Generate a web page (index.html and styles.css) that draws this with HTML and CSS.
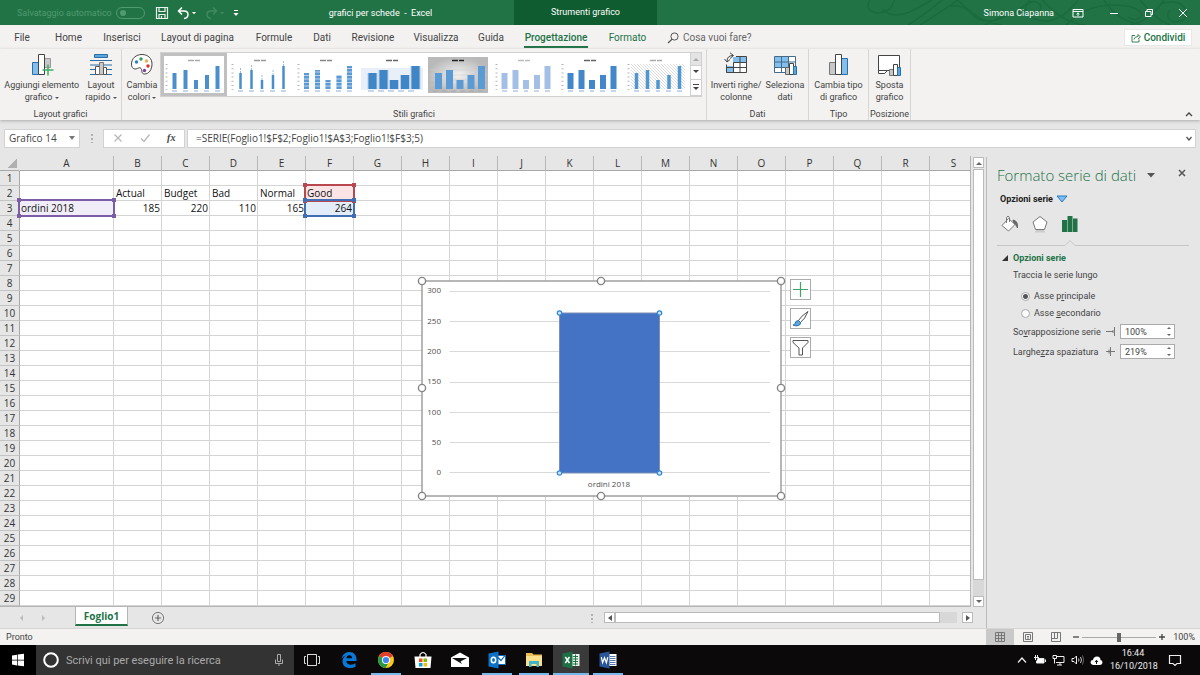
FILE: index.html
```html
<!DOCTYPE html>
<html lang="it">
<head>
<meta charset="utf-8">
<title>grafici per schede - Excel</title>
<link rel="stylesheet" href="styles.css">
</head>
<body>
<svg class="defs" aria-hidden="true">
  <defs>
    <radialGradient id="grayGlow"><stop offset="0" stop-color="#f2f2f2"/><stop offset="1" stop-color="#b9b9b9"/></radialGradient>
    <pattern id="hatch" width="3" height="3" patternUnits="userSpaceOnUse"><path d="M0 0L3 3" stroke="#cfcfcf" stroke-width=".7"/></pattern>
    <symbol id="bars" viewBox="0 0 66 43" overflow="visible"><path d="M13.500 36V20M24.500 36V17M35 36V27M46 36V22M56.500 36V13"/></symbol>
    <symbol id="axis" viewBox="0 0 66 43"><path d="M5.500 11v26" stroke="#b5b5b5" stroke-width="2" stroke-dasharray="1 3.200"/><path d="M11 38h5M22 38h5M33 38h4M43 38h5M54 38h5" stroke="#8fb0d3" stroke-width="1.200"/></symbol>
    <symbol id="heading" viewBox="0 0 66 43"><path d="M27 7.500h12" stroke-width="1.500" stroke-dasharray="6 1 5"/></symbol>
  </defs>
</svg>

<header class="titlebar">
  <div class="quick">
    <span class="autosave">Salvataggio automatico</span>
    <button class="toggle" aria-label="Salvataggio automatico"></button>
    <button class="qa" aria-label="Salva"><svg width="14" height="14" viewBox="0 0 14 14"><path d="M1.500 1.500h11v11h-11zM4 1.500v4h6v-4M4 12.500v-4h6v4M6.500 12V10" fill="none" stroke="#e6f2ea" stroke-width="1.200"/></svg></button>
    <button class="qa" aria-label="Annulla"><svg width="20" height="14" viewBox="0 0 20 14"><path d="M5 1.500L1.500 5L5 8.500M1.500 5H7q4 0 4 3.500T7 12.500" fill="none" stroke="#fff" stroke-width="1.500"/><path d="M15 6h4l-2 2.200z" fill="#fff"/></svg></button>
    <button class="qa" aria-label="Ripeti"><svg width="20" height="14" viewBox="0 0 20 14"><path d="M8 1.500L11.500 5L8 8.500M11.500 5H6q-4 0-4 3.500T6 12.500" fill="none" stroke="#3f8a5f" stroke-width="1.500"/><path d="M15 6h4l-2 2.200z" fill="#3f8a5f"/></svg></button>
    <button class="qa" aria-label="Personalizza"><svg width="6" height="8" viewBox="0 0 6 8"><path d="M1 1.500h4" stroke="#fff"/><path d="M.5 4h5L3 7z" fill="#fff"/></svg></button>
    <span class="doc">grafici per schede &nbsp;-&nbsp; Excel</span>
  </div>
  <div class="context">Strumenti grafico</div>
  <div class="account">
    <svg class="swirls" viewBox="0 0 340 25" preserveAspectRatio="xMaxYMid slice" fill="none" stroke="#1b6a3f" stroke-width="1.500" aria-hidden="true"><path d="M10 0q-6 10 6 13q16 0 18-13M22 9q10 10 28 3L72 0M48 25Q66 14 82 0M60 25Q84 10 98 0M90 6q14-2 22 8q10 12 30 4T170 0M98 0q20 22 44 25M125 25Q150 10 166 12q18 4 14-8q-8-6-14 2q-4 12 18 15q20 0 36-24M182 0q22 24 44 25M206 25q20-20 46-20t30 10q-6 8-14 2M244 0q12 20 38 25M280 0q16 20 30 25M270 25q20-4 34-25M300 4q20-6 26 6q2 12-12 12q-10-4-4-12"/></svg>
    <span class="user">Simona Ciapanna</span>
    <button class="win" aria-label="Opzioni barra multifunzione"><svg width="12" height="10" viewBox="0 0 12 10"><path d="M1 1.500h10v7.500H1zM1 3.500h10M6 8V5M4.500 6.200L6 4.800l1.500 1.400" fill="none" stroke="#fff"/></svg></button>
    <button class="win" aria-label="Riduci a icona"><svg width="10" height="10" viewBox="0 0 10 10"><path d="M1 5.500h8" stroke="#fff"/></svg></button>
    <button class="win" aria-label="Ripristina"><svg width="10" height="10" viewBox="0 0 10 10"><path d="M1.500 3.500h5.500v5h-5.500zM3 3.500v-2h5.500v5H7" fill="none" stroke="#fff"/></svg></button>
    <button class="win" aria-label="Chiudi"><svg width="10" height="10" viewBox="0 0 10 10"><path d="M1 1l8 8M9 1L1 9" stroke="#fff"/></svg></button>
  </div>
</header>

<nav class="tabs">
  <button>File</button><button>Home</button><button>Inserisci</button><button>Layout di pagina</button><button>Formule</button><button>Dati</button><button>Revisione</button><button>Visualizza</button><button>Guida</button><button class="tab-green tab-on"><span>Progettazione</span></button><button class="tab-green">Formato</button>
  <button class="tell"><svg width="12" height="12" viewBox="0 0 12 12"><circle cx="7.500" cy="4.500" r="3.600" fill="none" stroke="#555"/><path d="M5 7.200L1 11" stroke="#555" stroke-width="1.200"/></svg>Cosa vuoi fare?</button>
  <button class="share"><svg width="10" height="10" viewBox="0 0 10 10"><path d="M4 2.500H1v6.500h7V6.500M3 6.500q.5-3 4-3V1.500l2.500 2.500L7 6" fill="none" stroke="#217346" stroke-width=".9"/></svg>Condividi</button>
</nav>

<section class="ribbon">
  <div class="group g-layout">
    <div class="tools">
      <button class="tool"><svg width="24" height="24" viewBox="0 0 24 24"><path d="M2.500 10.500h6v12h-6z" fill="#83beec" stroke="#2b6fa8"/><path d="M14.500 6.500h6v9h-6z" fill="#c8c8c8" stroke="#999"/><path d="M8.500 2.500h6v20h-6z" fill="#fff" stroke="#444"/><path d="M18 12.500v11M12.500 18h11" stroke="#3fae68" stroke-width="1.500"/></svg><span>Aggiungi elemento<br>grafico <i></i></span></button>
      <button class="tool"><svg width="24" height="24" viewBox="0 0 24 24"><path d="M5.500 2.500h13v3h-13z" fill="#5ca6dd" stroke="#2b6fa8"/><path d="M1 8.500h22M1 13h22M1 17.500h22M1 22.500h22" stroke="#2b6fa8"/><path d="M6.500 14.500h4v8h-4z" fill="#fff" stroke="#555"/><path d="M10.500 10.500h4v12h-4z" fill="#c8c8c8" stroke="#777"/><path d="M14.500 15.500h3v7h-3z" fill="#fff" stroke="#555"/></svg><span>Layout<br>rapido <i></i></span></button>
    </div>
    <div class="caption">Layout grafici</div>
  </div>
  <div class="group g-styles">
    <div class="tools">
      <button class="tool"><svg width="24" height="24" viewBox="0 0 24 24"><path d="M12 2.500c6 0 10 4 10 9.500s-3 10-7.500 10c-3.500 0-2-3.500-3.500-5.500s-3.500.5-6 .5-3.500-2.500-3.500-5C1.500 6.500 6 2.500 12 2.500z" fill="#fff" stroke="#444"/><circle cx="6.500" cy="10" r="1.700" fill="#2b7cd3"/><circle cx="11" cy="7" r="1.700" fill="#2e9c5a"/><circle cx="16.500" cy="9" r="1.700" fill="#e8b04a"/><circle cx="18" cy="14" r="1.700" fill="#d9302c"/><circle cx="14.500" cy="18.500" r="1.700" fill="#7b3f9e"/></svg><span>Cambia<br>colori <i></i></span></button>
      <div class="gallery">
        <button class="thumb thumb-on" aria-label="Stile 1"><svg viewBox="0 0 66 43"><use href="#heading" stroke="#aaa"/><use href="#axis"/><use href="#bars" stroke="#4a8fcb" stroke-width="4"/></svg></button>
        <button class="thumb" aria-label="Stile 2"><svg viewBox="0 0 66 43"><use href="#heading" stroke="#999"/><use href="#axis"/><path d="M13.500 20v-5M24.500 17v-5M35 27v-5M46 22v-5M56.500 13v-5" stroke="#9bbfe0" stroke-dasharray="2 1"/><use href="#bars" stroke="#4a8fcb" stroke-width="2.500"/></svg></button>
        <button class="thumb" aria-label="Stile 3"><svg viewBox="0 0 66 43"><use href="#heading" stroke="#888"/><use href="#axis"/><use href="#bars" stroke="#b9d5ee" stroke-width="5"/><use href="#bars" stroke="#5b9bd5" stroke-width="5" stroke-dasharray="2.500 1"/></svg></button>
        <button class="thumb" aria-label="Stile 4"><svg viewBox="0 0 66 43"><path d="M2 15h62v22H2z" fill="#e8eff8"/><use href="#heading" stroke="#666"/><path d="M9 38h50" stroke="#8fb0d3" stroke-dasharray="6 4"/><use href="#bars" stroke="#b8cde6" stroke-width="10"/><use href="#bars" stroke="#3f86c6" stroke-width="8"/></svg></button>
        <button class="thumb" aria-label="Stile 5"><svg viewBox="0 0 66 43"><path d="M3 4h60v36H3z" fill="url(#grayGlow)"/><path d="M5 17h56M5 22h56M5 27h56M5 32h56" stroke="#ccc" stroke-width=".6"/><use href="#heading" stroke="#222"/><path d="M8 38h51" stroke="#aaa" stroke-dasharray="5 4"/><use href="#bars" stroke="#5b9bd5" stroke-width="7"/></svg></button>
        <button class="thumb" aria-label="Stile 6"><svg viewBox="0 0 66 43"><use href="#heading" stroke="#bbb"/><use href="#axis"/><use href="#bars" stroke="#a3bfe5" stroke-width="6"/></svg></button>
        <button class="thumb" aria-label="Stile 7"><svg viewBox="0 0 66 43"><use href="#heading" stroke="#666"/><use href="#axis"/><use href="#bars" stroke="#4187c9" stroke-width="6"/></svg></button>
        <button class="thumb" aria-label="Stile 8"><svg viewBox="0 0 66 43"><path d="M8 11h54v25H8z" fill="url(#hatch)"/><use href="#heading" stroke="#aaa"/><use href="#axis"/><use href="#bars" stroke="#4f97d3" stroke-width="3.500"/></svg></button>
        <div class="gallery-nav">
          <button class="off" aria-label="Su"><svg width="6" height="4"><path d="M0 4h6L3 1z" fill="#aaa"/></svg></button>
          <button aria-label="Giù"><svg width="6" height="4"><path d="M0 0h6L3 3z" fill="#444"/></svg></button>
          <button aria-label="Altro"><svg width="6" height="7"><path d="M0 .5h6" stroke="#444"/><path d="M0 3h6L3 6z" fill="#444"/></svg></button>
        </div>
      </div>
    </div>
    <div class="caption">Stili grafici</div>
  </div>
  <div class="group g-data">
    <div class="tools">
      <button class="tool"><svg width="24" height="24" viewBox="0 0 24 24"><path d="M2 14h7v7H2zM9 5h14v6H9z" fill="#83beec"/><path d="M9 11h14v10H9z" fill="#fff"/><path d="M12 4.500h10.500v16h-20v-8M2.500 15.500h20M9.500 10.500h13M9.500 10.500v10M16 4.500v16" fill="none" stroke="#444"/><path d="M3 9.500Q3 3.500 9 3.500M6 .8l3.500 2.700L6 6.500M.5 7L3 10L6 7.500" fill="none" stroke="#444"/></svg><span>Inverti righe/<br>colonne</span></button>
      <button class="tool"><svg width="24" height="24" viewBox="0 0 24 24"><path d="M1.500 4.500h21v16h-21z" fill="#fff"/><path d="M1.500 4.500h14v11h-14z" fill="#83beec"/><path d="M1.500 4.500h21v16h-21zM8.500 4.500v16M15.500 4.500v16M1.500 10h21M1.500 15.500h21" fill="none" stroke="#446b8a"/><path d="M12.500 15.500h4v7h-4z" fill="#c8c8c8" stroke="#666"/><path d="M16.500 11.500h4v11h-4z" fill="#fff" stroke="#444"/><path d="M20.500 14.500h3v8h-3z" fill="#5ca6dd" stroke="#2b6fa8"/></svg><span>Seleziona<br>dati</span></button>
    </div>
    <div class="caption">Dati</div>
  </div>
  <div class="group g-type">
    <div class="tools"><button class="tool"><svg width="24" height="24" viewBox="0 0 24 24"><path d="M2.500 10.500h6v12h-6z" fill="#c8c8c8" stroke="#777"/><path d="M14.500 6.500h6v16h-6z" fill="#83beec" stroke="#2b6fa8"/><path d="M8.500 2.500h6v20h-6z" fill="#fff" stroke="#444"/></svg><span>Cambia tipo<br>di grafico</span></button></div>
    <div class="caption">Tipo</div>
  </div>
  <div class="group g-place">
    <div class="tools"><button class="tool"><svg width="24" height="24" viewBox="0 0 24 24"><path d="M1.500 3.500h21v15h-12l-3 3h-6z" fill="#fff" stroke="#444"/><path d="M1.500 18.500h9l-3 3" fill="none" stroke="#444"/><path d="M12.500 17.500h4v6h-4z" fill="#c8c8c8" stroke="#777"/><path d="M16.500 12.500h4v11h-4z" fill="#fff" stroke="#444"/><path d="M20.500 15.500h3v8h-3z" fill="#5ca6dd" stroke="#2b6fa8"/></svg><span>Sposta<br>grafico</span></button></div>
    <div class="caption">Posizione</div>
  </div>
  <button class="collapse" aria-label="Comprimi"><svg width="8" height="5"><path d="M1 4l3-3l3 3" fill="none" stroke="#444" stroke-width="1.300"/></svg></button>
</section>

<section class="formula-bar">
  <button class="namebox">Grafico 14<svg width="6" height="4"><path d="M0 0h6L3 4z" fill="#777"/></svg></button>
  <span class="grip"></span>
  <div class="fx">
    <button aria-label="Annulla"><svg width="10" height="10" viewBox="0 0 10 10"><path d="M1.500 1.500l7 7M8.500 1.500l-7 7" stroke="#b8b8b8" stroke-width="1.300"/></svg></button>
    <button aria-label="Invio"><svg width="10" height="10" viewBox="0 0 10 10"><path d="M1 5.500l3 3l5.500-7" fill="none" stroke="#b8b8b8" stroke-width="1.300"/></svg></button>
    <button class="fx-sign" aria-label="Inserisci funzione"><i>f</i>x</button>
  </div>
  <div class="formula"><input aria-label="Formula" value="=SERIE(Foglio1!$F$2;Foglio1!$A$3;Foglio1!$F$3;5)"><svg width="6" height="5"><path d="M.5 1L3 4L5.500 1" fill="none" stroke="#555" stroke-width="1.300"/></svg></div>
</section>

<main class="workspace">
  <section class="book">
    <div class="upper">
      <div class="sheet">
        <table class="grid" id="grid"></table>
        <div class="chart">
          <svg width="372" height="228" viewBox="416 275 372 228">
            <path d="M422 281h359v215H422z" fill="#fff" stroke="#a0a0a0" stroke-width="1.500"/>
            <path d="M449.500 291.500H770M449.500 321.500H770M449.500 351.500H770M449.500 382.500H770M449.500 412.500H770M449.500 442.500H770M449.500 472.500H770" stroke="#d9d9d9"/>
            <g class="axis-text" text-anchor="end"><text x="441" y="293">300</text><text x="441" y="324">250</text><text x="441" y="354">200</text><text x="441" y="384">150</text><text x="441" y="415">100</text><text x="441" y="445">50</text><text x="441" y="475">0</text></g>
            <text class="axis-text" x="609" y="487" text-anchor="middle">ordini 2018</text>
            <path d="M559.500 313h100v160h-100z" fill="#4472c4" stroke="#7d8fb3"/>
            <g fill="#cfe6fa" stroke="#2f86d6" stroke-width="1.200"><circle cx="559.500" cy="313" r="2.200"/><circle cx="659.500" cy="313" r="2.200"/><circle cx="559.500" cy="473" r="2.200"/><circle cx="659.500" cy="473" r="2.200"/></g>
            <g fill="#fff" stroke="#858585" stroke-width="1.400"><circle cx="422" cy="281" r="3.600"/><circle cx="601" cy="281" r="3.600"/><circle cx="781" cy="281" r="3.600"/><circle cx="422" cy="388" r="3.600"/><circle cx="781" cy="388" r="3.600"/><circle cx="422" cy="496" r="3.600"/><circle cx="601" cy="496" r="3.600"/><circle cx="781" cy="496" r="3.600"/></g>
          </svg>
          <div class="chart-side">
            <button aria-label="Elementi grafico"><svg width="19" height="19" viewBox="0 0 19 19"><path d="M9.500 2v15M2 9.500h15" stroke="#3fa66b" stroke-width="1.200"/></svg></button>
            <button aria-label="Stili grafico"><svg width="19" height="19" viewBox="0 0 19 19"><path d="M17 2.500Q10 7 7.500 11.500l2 2Q14 10 17 2.500z" fill="#fff" stroke="#555"/><path d="M7.500 11.500q-3 0-3.500 3-.5 1.500-2 1.500 3 1.500 5.500.5t2-3z" fill="#5ca6dd" stroke="#2b6fa8"/></svg></button>
            <button aria-label="Filtri grafico"><svg width="19" height="19" viewBox="0 0 19 19"><path d="M2 2.500h15v2L11.500 10v7h-3.500v-7L2 4.500z" fill="#fff" stroke="#555"/></svg></button>
          </div>
        </div>
      </div>
      <div class="vscroll"><button aria-label="Su"><svg width="6" height="4"><path d="M0 4h6L3 1z" fill="#666"/></svg></button><span class="vthumb"></span><span class="vtrack"></span><button aria-label="Giù"><svg width="6" height="4"><path d="M0 0h6L3 3z" fill="#666"/></svg></button></div>
    </div>
    <div class="sheet-tabs">
      <span class="sheet-nav"><svg width="28" height="6"><path d="M4 0v6L1 3zM23 0v6l3-3z" fill="#bbb"/></svg></span>
      <button class="sheet-tab">Foglio1</button>
      <button class="add" aria-label="Nuovo foglio"><svg width="14" height="14" viewBox="0 0 14 14"><circle cx="7" cy="7" r="5.600" fill="none" stroke="#777"/><path d="M7 4v6M4 7h6" stroke="#666" stroke-width="1.200"/></svg></button>
      <span class="grip grip-tabs"></span>
      <div class="hscroll"><button aria-label="Sinistra"><svg width="4" height="6"><path d="M4 0v6L0 3z" fill="#555"/></svg></button><span class="hthumb"></span><span class="htrack"></span><button aria-label="Destra"><svg width="4" height="6"><path d="M0 0v6l4-3z" fill="#555"/></svg></button></div>
    </div>
  </section>

  <aside class="pane">
    <header class="pane-head"><h2>Formato serie di dati</h2><button aria-label="Opzioni riquadro"><svg width="8" height="5"><path d="M0 0h8L4 4.500z" fill="#555"/></svg></button><button class="pane-close" aria-label="Chiudi"><svg width="8" height="8"><path d="M1 1l6 6M7 1L1 7" stroke="#555" stroke-width="1.500"/></svg></button></header>
    <button class="pane-drop">Opzioni serie<svg width="12" height="8"><path d="M1 1h10L6 7z" fill="#7cc0f5" stroke="#2878b8"/></svg></button>
    <div class="pane-icons">
      <button aria-label="Riempimento"><svg width="20" height="20" viewBox="0 0 20 20"><path d="M13 6q5 .5 4.500 8-1-4-3.500-4z" fill="#666" stroke="#666"/><path d="M2 11.500L8.500 4.500L15 10.500L8.500 17z" fill="#fff" stroke="#777"/><path d="M6.500 9V3.500q1.500-3 3 0V8" fill="none" stroke="#777"/></svg></button>
      <button aria-label="Effetti"><svg width="20" height="20" viewBox="0 0 20 20"><path d="M5 18.500l1-3h8l1 3z" fill="#ccc"/><path d="M10 2.500l7 5.500l-2.500 7.500h-9L3 8z" fill="#fff" stroke="#777"/></svg></button>
      <button aria-label="Opzioni serie"><svg width="20" height="20" viewBox="0 0 20 20"><path d="M2 6h5v12H2zM7.500 2h5v16h-5zM13 4.500h4.500V18H13z" fill="#217346"/></svg></button>
    </div>
    <svg class="pane-rule" width="192" height="8"><path d="M0 6.500h68l5-5l5 5h114" fill="none" stroke="#c6c6c6"/></svg>
    <h3><svg width="6" height="6"><path d="M6 0v6H0z" fill="#333"/></svg>Opzioni serie</h3>
    <p>Traccia le serie lungo</p>
    <label class="radio"><input type="radio" name="asse" checked><span>Asse p<u>r</u>incipale</span></label>
    <label class="radio"><input type="radio" name="asse"><span>Asse <u>s</u>econdario</span></label>
    <div class="spin-row"><label for="ov">So<u>v</u>rapposizione serie</label><svg width="10" height="9"><path d="M0 4.500h7M8.500 0v9M7 3v3" stroke="#777"/></svg><span class="spin"><input id="ov" value="100%"><span><button aria-label="Aumenta"></button><button class="down" aria-label="Riduci"></button></span></span></div>
    <div class="spin-row"><label for="gap">Larghe<u>z</u>za spaziatura</label><svg width="10" height="9"><path d="M0 4.500h9M4.500 0v9M3 2.500v4" stroke="#777"/></svg><span class="spin"><input id="gap" value="219%"><span><button aria-label="Aumenta"></button><button class="down" aria-label="Riduci"></button></span></span></div>
  </aside>
</main>

<footer class="status">
  <span>Pronto</span>
  <div class="views">
    <button class="view-on" aria-label="Normale"><svg width="12" height="12"><path d="M1.500 1.500h9v9h-9zM4.500 1.500v9M7.500 1.500v9M1.500 4.500h9M1.500 7.500h9" fill="none" stroke="#777"/></svg></button>
    <button aria-label="Layout di pagina"><svg width="12" height="12"><path d="M1.500 1.500h9v9h-9zM3.500 3.500h5v5h-5zM5 5.500h2M5 7h2" fill="none" stroke="#777"/></svg></button>
    <button aria-label="Anteprima interruzioni"><svg width="12" height="12"><path d="M1.500 1.500h9v9h-9zM1.500 7.500h6v-6M4.500 1.500v6" fill="none" stroke="#777"/></svg></button>
    <button class="zoom-step" aria-label="Riduci"><svg width="6" height="6"><path d="M0 3h6" stroke="#444" stroke-width="1.300"/></svg></button>
    <input class="zoom" type="range" aria-label="Zoom" value="50">
    <button class="zoom-step" aria-label="Ingrandisci"><svg width="6" height="6"><path d="M0 3h6M3 0v6" stroke="#444" stroke-width="1.300"/></svg></button>
    <span class="zoom-value">100%</span>
  </div>
</footer>

<footer class="taskbar">
  <button class="start" aria-label="Start"><svg width="14" height="14" viewBox="0 0 14 14"><path d="M1 2.500l5-.8v5H1zM6.700 1.600L13 .8v5.900H6.700zM1 7.400h5v5l-5-.8zM6.700 7.400H13v5.900l-6.300-.8z" fill="#fff"/></svg></button>
  <label class="search"><svg width="18" height="18" viewBox="0 0 18 18"><circle cx="9" cy="9" r="6.800" fill="none" stroke="#fff" stroke-width="2"/></svg><input placeholder="Scrivi qui per eseguire la ricerca"><svg width="10" height="14" viewBox="0 0 10 14"><path d="M3.500 1.500h3v7h-3zM1.500 6.500v4h7v-4M5 10.500V13" fill="none" stroke="#aaa"/></svg></label>
  <button class="app" aria-label="Visualizzazione attività"><svg width="18" height="14" viewBox="0 0 18 14"><path d="M4.500 1.500h9v11h-9zM3 3.500H1.500v7H3M15 3.500h1.500v7H15" fill="none" stroke="#ddd"/></svg></button>
  <button class="app" aria-label="Edge"><svg width="18" height="18" viewBox="0 0 18 18"><path d="M1.500 8C2.500 3.500 5.500 1 9.500 1c4.500 0 7 3.500 7 7.300V10H6.300c.2 2.500 2 3.700 4.500 3.700 1.900 0 3.300-.5 4.700-1.400v3.500c-1.500.8-3.300 1.200-5.500 1.200-4.700 0-7.500-2.700-7.500-6.500 0-2.800 1.500-5 4-6.200C4 5 2.500 6.300 1.500 8zM6.400 7.200h5.700c0-1.800-.9-3-2.700-3S6.600 5.400 6.400 7.200z" fill="#0a78d7"/></svg></button>
  <button class="app open" aria-label="Chrome"><svg width="18" height="18" viewBox="0 0 18 18"><circle cx="9" cy="9" r="8" fill="#fbc916"/><path d="M9 9L2.100 5A8 8 0 0 1 16 5z" fill="#e2402f"/><path d="M9 9L2.100 5A8 8 0 0 0 8.500 17L12 11z" fill="#279847"/><circle cx="9" cy="9" r="4" fill="#fff"/><circle cx="9" cy="9" r="3.100" fill="#4384f3"/></svg></button>
  <button class="app" aria-label="Store"><svg width="18" height="18" viewBox="0 0 18 18"><path d="M6 6V3.500q3-4 6 0V6" fill="none" stroke="#fff" stroke-width="1.200"/><path d="M.5 5.500h17L16.500 17h-15z" fill="#fff"/><path d="M5 7.500h3.500V11H5z" fill="#f25022"/><path d="M9.500 7.500H13V11H9.500z" fill="#7fba00"/><path d="M5 12h3.500v3.500H5z" fill="#00a4ef"/><path d="M9.500 12H13v3.500H9.500z" fill="#ffb900"/></svg></button>
  <button class="app" aria-label="Posta"><svg width="20" height="16" viewBox="0 0 20 16"><path d="M1 5.500L10 .5l9 5V15H1z" fill="#fff"/><path d="M2 6h15l-6.500 3.500L12 12z" fill="#111"/></svg></button>
  <button class="app open" aria-label="Outlook"><svg width="18" height="18" viewBox="0 0 18 18"><path d="M9 4.500h8.500v9H9z" fill="#fff" stroke="#0a67b5"/><path d="M10 6.500l3 3l4-5" fill="none" stroke="#0a67b5" stroke-width="1.200"/><path d="M.5 2.500L10.500.5v17l-10-2z" fill="#0d72c6"/><ellipse cx="5.500" cy="9" rx="2.200" ry="2.800" fill="none" stroke="#fff" stroke-width="1.500"/></svg></button>
  <button class="app open" aria-label="Esplora file"><svg width="18" height="16" viewBox="0 0 18 16"><path d="M1 1h6l1.500 1.500H17V14H1z" fill="#e9bf55"/><path d="M1 4h16v10H1z" fill="#fbe08b"/><path d="M4 15V9h10v6h-2.500v-3h-5v3z" fill="#43b4c8"/></svg></button>
  <button class="app open current" aria-label="Excel"><svg width="18" height="18" viewBox="0 0 18 18"><path d="M9 3h8.500v12H9z" fill="#e8f3ec"/><path d="M11 5.500h5M11 8h5M11 10.500h5M11 13h5M13.500 3.500v11" stroke="#217346"/><path d="M.5 2.500L10.500.5v17l-10-2z" fill="#1d7044"/><path d="M3.300 6l4.200 6M7.500 6l-4.200 6" stroke="#fff" stroke-width="1.500"/></svg></button>
  <button class="app open" aria-label="Word"><svg width="18" height="18" viewBox="0 0 18 18"><path d="M9 3h8.500v12H9z" fill="#fff"/><path d="M11 5.500h5.500M11 7.500h5.500M11 9.500h5.500M11 11.500h5.500M11 13.500h5.500" stroke="#2a5699" stroke-width=".8"/><path d="M.5 2.500L10.500.5v17l-10-2z" fill="#2a5699"/><path d="M2.300 6.200l1.300 5.500l1.900-5l1.900 5L8.800 6.200" fill="none" stroke="#fff" stroke-width="1.200"/></svg></button>
  <div class="tray">
    <svg width="10" height="8"><path d="M1 6.500l4-4.500l4 4.500" fill="none" stroke="#eee" stroke-width="1.200"/></svg>
    <svg width="13" height="10"><path d="M4.500 3.500h6.500v4.500H3.500V6" fill="#fff" stroke="#eee"/><path d="M12.500 4.500v2.500M1 2.500h5M2.500 0v5M4.500 0v3" stroke="#eee"/></svg>
    <svg width="13" height="12"><path d="M4 2.500h8v6H4M1 1.500h3.500v3H1zM2.500 4.500v5M5 11h5M8 8.500V11" fill="none" stroke="#eee"/></svg>
    <svg width="13" height="10"><path d="M1 3.500h2L5.500 1v8L3 6.500H1z" fill="none" stroke="#eee"/><path d="M7.500 3.500q1 1.500 0 3M9.500 2q2 3 0 6" fill="none" stroke="#ccc"/><path d="M11.500.5q2.500 4.500 0 9" fill="none" stroke="#666"/></svg>
    <svg width="13" height="9"><path d="M3 9Q.5 8.500.5 6.300T3 4q.5-3.500 4-3.500T10.500 4q2 .3 2 2.500T10 9z" fill="#fff"/><path d="M6.500 8V4.500M5 6l1.500-1.700L8 6" fill="none" stroke="#111"/></svg>
    <time>16:44<br>16/10/2018</time>
    <svg width="14" height="14"><path d="M1.500 2.500h11v8H9L7 12.500L5 10.500H1.500z" fill="none" stroke="#eee" stroke-width="1.200"/></svg>
  </div>
</footer>
<script src="grid.js"></script>
</body>
</html>
```
FILE: styles.css
```css
* { box-sizing: border-box; }
body {
  margin: 0;
  height: 100vh;
  display: flex;
  flex-direction: column;
  overflow: hidden;
  font: 9px/12px Roboto, "Open Sans", sans-serif;
  color: #444;
  background: #e6e6e6;
}
button { font: inherit; color: inherit; background: none; border: 0; padding: 0; margin: 0; }
input { font: inherit; color: inherit; margin: 0; }
svg { display: block; flex: none; }
.defs { position: absolute; width: 0; height: 0; }

/* Title bar */
.titlebar { flex: none; height: 25px; display: flex; background: #217346; color: #fff; }
.quick { width: 514px; display: flex; align-items: center; padding-left: 17px; }
.autosave { color: #4f9a6e; width: 99px; }
.toggle { width: 29px; height: 12px; border: 1px solid #4f9a6e; border-radius: 6px; margin-right: 10px; display: flex; align-items: center; padding-left: 3px; }
.toggle::before { content: ""; width: 6px; height: 6px; border-radius: 50%; background: #4f9a6e; }
.qa { margin-right: 8px; }
.doc { flex: 1; text-align: center; white-space: pre; }
.context { width: 143px; background: #0e5c2f; line-height: 25px; text-align: center; }
.account { flex: 1; position: relative; display: flex; align-items: center; justify-content: flex-end; padding-right: 10px; }
.swirls { position: absolute; right: 0; top: 0; width: 340px; height: 25px; }
.user { position: relative; margin-right: 12px; }
.win { position: relative; width: 35px; display: flex; justify-content: center; }
.win:nth-of-type(1) { width: 24px; margin-right: 6px; }
.win:last-child { width: 34px; margin-right: -10px; }

/* Ribbon tabs */
.tabs {
  flex: none;
  height: 24px;
  display: grid;
  grid-template-columns: 42px 51px 56px 95px 58px 38px 64px 62px 48px 82px 61px 1fr 68px;
  padding: 0 8px 0 1px;
  background: #f3f2f1;
  font-size: 10px;
}
.tabs button { padding-top: 1px; }
.tab-green { color: #217346; }
.tab-on { font-weight: 500; }
.tab-on span { display: inline-block; line-height: 16px; padding: 2px 1px 0; border-bottom: 2px solid #217346; }
.tabs .tell { display: flex; align-items: center; gap: 4px; padding-left: 9px; color: #666; }
.share { display: flex; align-items: center; justify-content: center; gap: 3px; align-self: center; height: 17px; background: #fff; border: 1px solid #e8e8e8; color: #217346; font-weight: 500; }

/* Ribbon */
.ribbon { flex: none; height: 71px; display: flex; background: #f3f2f1; box-shadow: 0 1px 3px #aaa; position: relative; }
.group { display: flex; flex-direction: column; justify-content: space-between; border-right: 1px solid #d8d6d4; }
.g-layout { width: 122px; }
.g-styles { width: 585px; }
.g-data { width: 102px; }
.g-type { width: 60px; }
.g-place { width: 42px; }
.tools { display: flex; justify-content: center; padding-top: 3px; }
.g-layout .tools { gap: 6px; }
.g-data .tools { gap: 4px; }
.g-styles .tools { justify-content: flex-start; padding-left: 4px; }
.tool { display: flex; flex-direction: column; align-items: center; gap: 3px; line-height: 12px; white-space: nowrap; }
.g-styles .tool { width: 32px; }
.tool i { display: inline-block; vertical-align: middle; border: 2px solid transparent; border-top-color: #555; border-bottom: 0; }
.caption { text-align: center; line-height: 12px; }
.gallery { display: flex; height: 45px; margin-left: 2px; background: #fff; border: 1px solid #d0d0d0; }
.thumb { width: 66px; height: 43px; display: flex; }
.thumb svg { width: 66px; height: 43px; fill: none; }
.thumb-on { outline: 3px solid #c0c0c0; outline-offset: -3px; }
.gallery-nav { display: grid; width: 11px; border-left: 1px solid #d0d0d0; margin-left: 1px; }
.gallery-nav button { display: flex; align-items: center; justify-content: center; border-bottom: 1px solid #d0d0d0; }
.gallery-nav .off { background: #e4e4e4; }
.collapse { margin: auto 7px 3px auto; }

/* Formula bar */
.formula-bar { flex: none; height: 36px; display: flex; align-items: center; padding: 0 4px; font: 10px/14px "Open Sans", "Noto Sans", sans-serif; }
.namebox { width: 76px; height: 19px; display: flex; align-items: center; justify-content: space-between; padding: 0 4px; background: #fff; border: 1px solid #d2d2d2; }
.grip { width: 23px; height: 10px; background: radial-gradient(circle, #b0b0b0 1px, transparent 1px) center top / 4px 4px repeat-y; }
.fx { width: 82px; height: 19px; display: flex; align-items: center; justify-content: space-around; background: #fff; border: 1px solid #d2d2d2; margin-right: 2px; }
.fx-sign { font: italic 10px/12px "Liberation Serif", serif; font-weight: bold; }
.formula { flex: 1; height: 19px; display: flex; align-items: center; background: #fff; border: 1px solid #d2d2d2; padding: 0 3px 0 8px; }
.formula input { flex: 1; border: 0; padding: 0; background: none; }

/* Sheet */
.workspace { flex: 1; min-height: 0; display: grid; grid-template-columns: minmax(0, 1fr) 214px; }
.book { display: flex; flex-direction: column; min-height: 0; min-width: 0; }
.upper { flex: 1; min-height: 0; display: flex; }
.sheet { flex: 1; min-width: 0; position: relative; overflow: hidden; border-right: 1px solid #b5b5b5; border-bottom: 1px solid #b5b5b5; margin-right: 2px; }
.grid { table-layout: fixed; border-collapse: separate; border-spacing: 0; width: 978px; font: 10px/14px "Open Sans", "Noto Sans", sans-serif; color: #111; }
.grid th { padding: 0; font-weight: 400; color: #333; background: #e6e6e6; }
.grid thead th { height: 15px; line-height: 14px; border-right: 1px solid #b8b8b8; border-bottom: 1px solid #a8a8a8; }
.grid tbody th { border-right: 1px solid #a8a8a8; border-bottom: 1px solid #c4c4c4; height: 15px; }
.grid td { padding: 0 1px 0 2px; height: 15px; background: #fff; border-right: 1px solid #d4d4d4; border-bottom: 1px solid #d4d4d4; white-space: nowrap; }
.col-head { width: 20px; }
.col-a { width: 94px; }
.grid .corner { background: linear-gradient(135deg, transparent 50%, #b0b0b0 50%) right 2px bottom 2px / 9px 9px no-repeat #e6e6e6; border-right-color: transparent; }
.num { text-align: right; }
.grid .range { position: relative; padding: 0 1px; }
.range::before { content: ""; position: absolute; z-index: 1; inset: -2px; border: 2px solid var(--c); }
.range::after {
  content: ""; position: absolute; z-index: 2; inset: -3px;
  background: linear-gradient(var(--c), var(--c)) left top / 4px 4px no-repeat, linear-gradient(var(--c), var(--c)) right top / 4px 4px no-repeat, linear-gradient(var(--c), var(--c)) left bottom / 4px 4px no-repeat, linear-gradient(var(--c), var(--c)) right bottom / 4px 4px no-repeat;
}
.grid .range-purple { --c: #7b5ea7; background: #f1edf8; }
.grid .range-red { --c: #b8474f; background: #fbe4e6; }
.grid .range-blue { --c: #3f6eb5; background: #e3edfa; }

/* Chart object floating on the sheet */
.chart { position: absolute; z-index: 3; left: 416px; top: 119px; display: flex; gap: 2px; }
.axis-text { font: 8px "Open Sans", "Noto Sans", sans-serif; fill: #505050; }
.chart-side { display: flex; flex-direction: column; gap: 8px; padding-top: 4px; }
.chart-side button { width: 21px; height: 21px; background: #fff; border: 1px solid #ababab; }

.vscroll { width: 11px; margin-right: 2px; display: flex; flex-direction: column; padding-top: 1px; }
.vscroll button, .hscroll button { flex: none; width: 11px; height: 11px; display: flex; align-items: center; justify-content: center; background: #fff; border: 1px solid #bbb; }
.vthumb { flex: 1; margin-top: 1px; background: #fff; border: 1px solid #bbb; }
.vtrack { height: 16px; background: #d8d8d8; }

.sheet-tabs { flex: none; height: 21px; display: flex; align-items: center; background: #e6e6e6; padding-right: 13px; }
.sheet-nav { width: 75px; padding-left: 19px; }
.sheet-tab { width: 53px; height: 19px; align-self: flex-start; background: #fff; border: 1px solid #b5b5b5; border-top: 0; border-bottom: 2px solid #217346; color: #217346; font: bold 10px/18px "Open Sans", sans-serif; }
.add { margin-left: 23px; }
.grip-tabs { width: 25px; margin-left: auto; }
.hscroll { flex: 0 0 369px; display: flex; height: 11px; }
.hthumb { flex: 1; background: #fff; border: 1px solid #bbb; }
.htrack { width: 17px; background: #d8d8d8; margin-right: 5px; }

/* Format pane */
.pane { border-left: 1px solid #bbb; margin-top: 1px; padding: 8px 10px; }
.pane-head { display: flex; align-items: center; color: #217346; }
.pane h2 { margin: 0 11px 0 0; font: 300 15px/20px "Open Sans", sans-serif; }
.pane-close { margin: 0 4px 4px auto; }
.pane-drop { display: flex; align-items: center; gap: 3px; margin: 8px 0 0 3px; font-weight: 700; color: #222; }
.pane-icons { display: flex; gap: 10px; padding-left: 3px; margin-top: 9px; }
.pane-rule { margin-top: 5px; }
.pane h3 { display: flex; align-items: center; gap: 5px; margin: 5px 0 5px 5px; font: 700 9px/12px Roboto, sans-serif; color: #217346; }
.pane p { margin: 0 0 9px 16px; }
.radio { display: flex; align-items: center; gap: 4px; height: 12px; margin: 0 0 5px 24px; }
.radio input { appearance: none; width: 9px; height: 9px; border: 1px solid #aaa; border-radius: 50%; background: #fff; }
.radio input:checked { background: radial-gradient(circle, #555 2px, #fff 3px); }
.spin-row { display: flex; align-items: center; height: 15px; margin: 5px 15px 0 16px; }
.spin-row label { flex: 1; white-space: nowrap; }
.spin { width: 55px; height: 15px; display: flex; margin-left: 4px; background: #fff; border: 1px solid #ababab; }
.spin input { flex: 1; min-width: 0; border: 0; padding: 0 0 0 4px; background: none; }
.spin > span { width: 11px; display: flex; flex-direction: column; justify-content: space-around; align-items: center; }
.spin button { border: 2px solid transparent; border-bottom-color: #666; border-top: 0; }
.spin .down { border-top: 2px solid #666; border-bottom: 0; }

/* Status bar */
.status { flex: none; height: 17px; display: flex; align-items: center; justify-content: space-between; padding: 0 5px 0 6px; background: #f3f2f1; border-top: 1px solid #d5d5d5; }
.views { display: flex; align-items: center; align-self: stretch; }
.views > button { width: 28px; align-self: stretch; display: flex; align-items: center; justify-content: center; }
.views .view-on { background: #c9c9c9; }
.views > .zoom-step { width: 12px; }
.zoom { appearance: none; width: 74px; height: 10px; background: linear-gradient(#aaa, #aaa) center / 100% 1px no-repeat; }
.zoom::-webkit-slider-thumb { appearance: none; width: 4px; height: 9px; background: #666; }
.zoom-value { width: 27px; text-align: right; }

/* Taskbar */
.taskbar { flex: none; height: 30px; display: flex; background: #0b090a; color: #eee; }
.start { width: 36px; display: flex; align-items: center; justify-content: center; background: #000; }
.search { width: 258px; display: flex; align-items: center; gap: 6px; padding: 0 10px 0 6px; background: #333; }
.search input { flex: 1; min-width: 0; border: 0; padding: 1px 0 0; background: none; font-size: 11px; }
.search input::placeholder { color: #aaa; opacity: 1; }
.app { width: 30px; margin: 0 4px 0 3px; display: flex; align-items: center; justify-content: center; border-bottom: 2px solid transparent; border-top: 2px solid transparent; }
.open { border-bottom-color: #76b9ed; }
.current { width: 36px; margin: 0 1px 0 0; background: #3a3a3a; border-top-color: #3a3a3a; }
.tray { margin-left: auto; display: flex; align-items: center; gap: 6px; padding-right: 18px; }
.tray time { width: 46px; text-align: center; margin: 0 6px 0 1px; line-height: 13px; white-space: nowrap; }
```
FILE: grid.js
```js
const letters = "ABCDEFGHIJKLMNOPQRS".split("");
const rowCount = 29;
const cells = {
  B2: "Actual", C2: "Budget", D2: "Bad", E2: "Normal", F2: "Good",
  A3: "ordini 2018", B3: 185, C3: 220, D3: 110, E3: 165, F3: 264
};
const ranges = { A3: "range range-purple", F2: "range range-red", F3: "range range-blue" };

let html = '<colgroup><col class="col-head"><col class="col-a"></colgroup><thead><tr><th class="corner"></th>';
html += letters.map(l => `<th scope="col">${l}</th>`).join("") + "</tr></thead><tbody>";
for (let r = 1; r <= rowCount; r++) {
  html += `<tr><th scope="row">${r}</th>`;
  for (const l of letters) {
    const key = l + r;
    const value = cells[key] ?? "";
    const classes = [typeof value === "number" ? "num" : "", ranges[key] ?? ""].join(" ").trim();
    html += `<td${classes ? ` class="${classes}"` : ""}>${value}</td>`;
  }
  html += "</tr>";
}
document.getElementById("grid").innerHTML = html + "</tbody>";
```
